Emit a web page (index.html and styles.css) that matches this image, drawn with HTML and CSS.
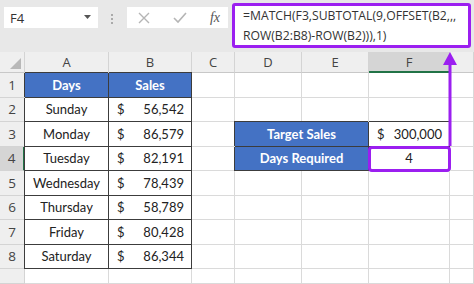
FILE: index.html
```html
<!DOCTYPE html>
<html>
<head>
  <meta charset="utf-8">
  <title>MATCH with SUBTOTAL and OFFSET</title>
  <link rel="stylesheet" href="styles.css">
</head>
<body class="xl">

<div class="xl-bar">
  <div class="xl-name">
    <span>F4</span>
    <svg width="8" height="5" viewBox="0 0 8 5"><path d="M0 0h7L3.5 4z" fill="#555"/></svg>
  </div>
  <div class="xl-grip"><i></i><i></i><i></i></div>
  <div class="xl-btns">
    <svg width="14" height="14" viewBox="0 0 14 14"><path d="M2 2l10 10M12 2L2 12" stroke="#b5b5b5" stroke-width="1.4"/></svg>
    <svg width="16" height="14" viewBox="0 0 16 14"><path d="M2 7l4 4 8-9" stroke="#b5b5b5" stroke-width="1.6" fill="none"/></svg>
    <span class="xl-fx">fx</span>
  </div>
  <div class="xl-formula">=MATCH(F3,SUBTOTAL(9,OFFSET(B2,,,<br>ROW(B2:B8)-ROW(B2))),1)</div>
</div>

<div class="xl-sheet">
  <div class="xl-corner"><b></b></div>
  <div class="xl-ch">A</div>
  <div class="xl-ch">B</div>
  <div class="xl-ch">C</div>
  <div class="xl-ch">D</div>
  <div class="xl-ch">E</div>
  <div class="xl-ch on">F</div>
  <div class="xl-ch"></div>

  <div class="xl-rh">1</div>
  <div class="xl-c t th top left">Days</div>
  <div class="xl-c t th top">Sales</div>
  <div class="xl-c"></div><div class="xl-c"></div><div class="xl-c"></div><div class="xl-c"></div><div class="xl-c"></div>

  <div class="xl-rh">2</div>
  <div class="xl-c t left">Sunday</div>
  <div class="xl-c t money"><span>$</span><span>56,542</span></div>
  <div class="xl-c"></div><div class="xl-c"></div><div class="xl-c"></div><div class="xl-c"></div><div class="xl-c"></div>

  <div class="xl-rh">3</div>
  <div class="xl-c t left">Monday</div>
  <div class="xl-c t money"><span>$</span><span>86,579</span></div>
  <div class="xl-c"></div>
  <div class="xl-c t th top left span2">Target Sales</div>
  <div class="xl-c t money top"><span>$</span><span>300,000</span></div>
  <div class="xl-c"></div>

  <div class="xl-rh on">4</div>
  <div class="xl-c t left">Tuesday</div>
  <div class="xl-c t money"><span>$</span><span>82,191</span></div>
  <div class="xl-c"></div>
  <div class="xl-c t th left span2">Days Required</div>
  <div class="xl-c t sel">4</div>
  <div class="xl-c"></div>

  <div class="xl-rh">5</div>
  <div class="xl-c t left">Wednesday</div>
  <div class="xl-c t money"><span>$</span><span>78,439</span></div>
  <div class="xl-c"></div><div class="xl-c"></div><div class="xl-c"></div><div class="xl-c"></div><div class="xl-c"></div>

  <div class="xl-rh">6</div>
  <div class="xl-c t left">Thursday</div>
  <div class="xl-c t money"><span>$</span><span>58,789</span></div>
  <div class="xl-c"></div><div class="xl-c"></div><div class="xl-c"></div><div class="xl-c"></div><div class="xl-c"></div>

  <div class="xl-rh">7</div>
  <div class="xl-c t left">Friday</div>
  <div class="xl-c t money"><span>$</span><span>80,428</span></div>
  <div class="xl-c"></div><div class="xl-c"></div><div class="xl-c"></div><div class="xl-c"></div><div class="xl-c"></div>

  <div class="xl-rh">8</div>
  <div class="xl-c t left">Saturday</div>
  <div class="xl-c t money"><span>$</span><span>86,344</span></div>
  <div class="xl-c"></div><div class="xl-c"></div><div class="xl-c"></div><div class="xl-c"></div><div class="xl-c"></div>

  <div class="xl-rh"></div>
  <div class="xl-c"></div><div class="xl-c"></div><div class="xl-c"></div><div class="xl-c"></div><div class="xl-c"></div><div class="xl-c"></div><div class="xl-c"></div>
</div>

<!-- annotation arrow from F4 up to the formula bar -->
<svg class="xl-arrow" width="474" height="284" viewBox="0 0 474 284">
  <path d="M450 146V62" stroke="#9b1ff0" stroke-width="3"/>
  <path d="M450 52l-7 13h14z" fill="#9b1ff0"/>
</svg>

</body>
</html>
```

FILE: styles.css
```css
*,
*::before,
*::after {
  box-sizing: border-box;
}

.xl {
  margin: 0;
  width: 474px;
  height: 284px;
  overflow: hidden;
  position: relative;
  background: #fff;
  font-family: "Open Sans", sans-serif;
  color: #222;
}

/* formula bar */
.xl-bar {
  display: flex;
  align-items: flex-start;
  height: 52px;
  padding: 3px 3px 0 4px;
  background: #e8e8e8;
}

.xl-name {
  display: flex;
  align-items: center;
  justify-content: space-between;
  width: 94px;
  height: 21px;
  margin-top: 4px;
  padding: 0 6px 0 6px;
  background: #fff;
  font-size: 13px;
  color: #333;
}

.xl-grip {
  display: flex;
  flex-direction: column;
  gap: 2px;
  margin: 11px 14px 0 13px;
}
.xl-grip i {
  width: 2px;
  height: 2px;
  background: #aaa;
}

.xl-btns {
  display: flex;
  align-items: center;
  justify-content: space-between;
  width: 101px;
  height: 21px;
  margin-top: 4px;
  padding: 0 8px 0 10px;
  background: #fff;
}

.xl-fx {
  font-family: "Liberation Serif", serif;
  font-style: italic;
  font-size: 14px;
  color: #555;
}

.xl-formula {
  flex: 1;
  height: 45px;
  margin-left: 4px;
  padding: 0 0 0 8px;
  background: #fff;
  border: 3px solid #9b1ff0;
  border-radius: 3px;
  font-size: 12.2px;
  line-height: 20px;
  color: #333;
  white-space: nowrap;
}

/* grid */
.xl-sheet {
  display: grid;
  grid-template-columns: 25px 84px 83px 43px 67px 67px 81px 1fr;
  grid-template-rows: 21px repeat(8, 24.5px) 1fr;
  height: 232px;
  font-family: Lato, sans-serif;
  font-size: 13px;
}

.xl-corner,
.xl-ch,
.xl-rh {
  background: #efefef;
  color: #444;
  border-right: 1px solid #d4d4d4;
  border-bottom: 1px solid #c8c8c8;
  display: flex;
  align-items: center;
  justify-content: center;
  font-family: "Open Sans", sans-serif;
}

.xl-ch {
  font-size: 13px;
}

.xl-ch.on {
  background: #d5d5d5;
  border-bottom: 2px solid #217346;
}

.xl-rh {
  font-size: 13.5px;
  border-bottom-color: #d4d4d4;
}

.xl-rh.on {
  background: #d5d5d5;
  border-right: 2px solid #217346;
}

.xl-corner {
  position: relative;
}
.xl-corner b {
  position: absolute;
  right: 3px;
  bottom: 3px;
  width: 0;
  height: 0;
  border-left: 11px solid transparent;
  border-bottom: 11px solid #b8b8b8;
}

.xl-c {
  border-right: 1px solid #dadada;
  border-bottom: 1px solid #dadada;
  display: flex;
  align-items: center;
  justify-content: center;
}

.xl-c.t {
  border-color: #3c3c3c;
}
.xl-c.top {
  box-shadow: 0 -1px 0 #3c3c3c;
}
.xl-c.left {
  box-shadow: -1px 0 0 #3c3c3c;
}
.xl-c.top.left {
  box-shadow: -1px -1px 0 #3c3c3c;
}

.xl-c.th {
  background: #4472c4;
  color: #fff;
  font-weight: bold;
}

.span2 {
  grid-column: span 2;
}

.xl-c.money {
  justify-content: space-between;
  padding: 0 7px 0 8px;
}

.xl-c.sel {
  border-radius: 3px;
  outline: 3px solid #9b1ff0;
  outline-offset: -2px;
}

.xl-arrow {
  position: absolute;
  left: 0;
  top: 0;
  pointer-events: none;
}
```
